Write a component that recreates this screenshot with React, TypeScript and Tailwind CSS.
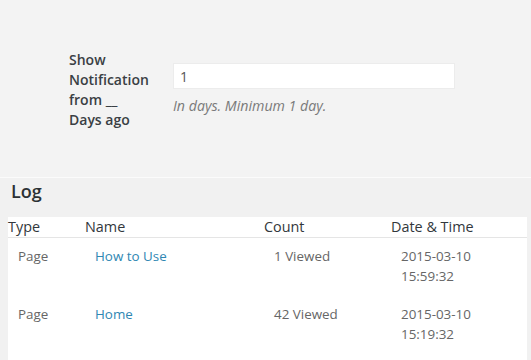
export default function App() {
  const rows = [
    { type: "Page", name: "How to Use", count: "1 Viewed", date: "2015-03-10", time: "15:59:32" },
    { type: "Page", name: "Home", count: "42 Viewed", date: "2015-03-10", time: "15:19:32" },
  ];
  return (
    <div className="w-[531px] h-[360px] overflow-hidden bg-[#f1f1f1] font-['Open_Sans',sans-serif] flex flex-col">
      <div className="h-[178px] shrink-0 bg-[#f3f3f3] border-b border-[#fbfbfb] flex pt-[50px] pl-[69px]">
        <div className="w-[84px] text-[14px] font-semibold leading-[20px] text-[#3a3f44]">
          Show Notification from __ Days ago
        </div>
        <div className="ml-[20px] pt-[13px]">
          <input
            readOnly
            value="1"
            className="block w-[282px] h-[26px] bg-white border border-[#ececec] px-[6px] text-[14px] text-[#555] outline-none font-['Open_Sans',sans-serif]"
          />
          <p className="mt-[7px] text-[14.2px] italic leading-[20px] text-[#7a7a7a]">In days. Minimum 1 day.</p>
        </div>
      </div>
      <h2 className="pl-[11px] pt-[1px] text-[18px] font-semibold leading-[24px] text-[#2c3135]">Log</h2>
      <div className="ml-[8px] mt-[14px] w-[519px] bg-white flex-1">
        <div className="grid grid-cols-[77px_179px_127px_136px] h-[21px] border-b border-[#e5e5e5] text-[14.4px] leading-[20px] text-[#32373c]">
          <div>Type</div>
          <div>Name</div>
          <div>Count</div>
          <div>Date &amp; Time</div>
        </div>
        {rows.map((r, i) => (
          <div key={i} className="grid grid-cols-[77px_179px_127px_136px] pt-[8px] pb-[10px] text-[13.4px] leading-[20px] text-[#666]">
            <div className="pl-[10px]">{r.type}</div>
            <div className="pl-[10px] text-[#2f87b3]">{r.name}</div>
            <div className="pl-[10px]">{r.count}</div>
            <div className="pl-[10px]">
              {r.date}
              <br />
              {r.time}
            </div>
          </div>
        ))}
      </div>
    </div>
  );
}
